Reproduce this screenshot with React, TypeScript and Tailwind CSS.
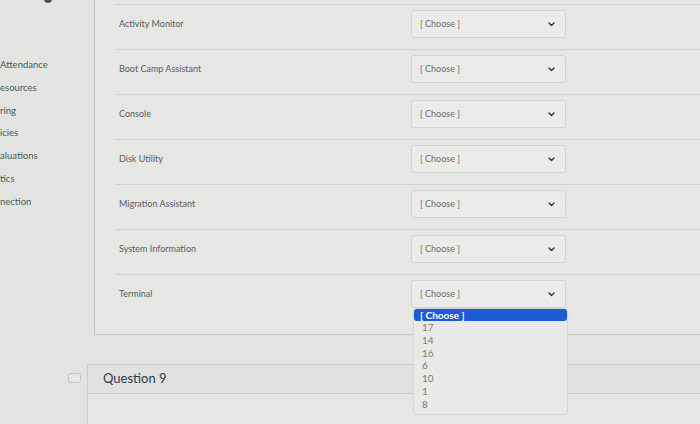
import React from "react";

const rows = [
  "Activity Monitor",
  "Boot Camp Assistant",
  "Console",
  "Disk Utility",
  "Migration Assistant",
  "System Information",
  "Terminal",
];

const nav = ["Attendance", "esources", "ring", "icies", "aluations", "tics", "nection"];

const options = ["17", "14", "16", "6", "10", "1", "8"];

function Chevron() {
  return (
    <svg width="7" height="5" viewBox="0 0 7 5" className="shrink-0">
      <path d="M1 1 L3.5 3.6 L6 1" fill="none" stroke="#3a3a3a" strokeWidth="1.4" strokeLinecap="round" strokeLinejoin="round" />
    </svg>
  );
}

function Select({ open }: { open?: boolean }) {
  return (
    <div className="relative">
      <div className="flex h-[28px] w-[155px] items-center justify-between rounded-[3px] border border-[#d3d4d2] bg-[#ebecea] pl-[8px] pr-[10px]">
        <span className="text-[9px] text-[#6b6b6b]">[ Choose ]</span>
        <Chevron />
      </div>
      {open && (
        <div className="absolute left-[2px] top-[28px] z-10 w-[155px] rounded-[4px] border border-[#d6d7d5] bg-[#e9eae8] pb-[3px]">
          <div className="rounded-[3px] bg-[#1b5bd6] pl-[6px] text-[10px] font-bold leading-[12px] text-white">[ Choose ]</div>
          {options.map((o) => (
            <div key={o} className="pl-[8px] text-[10px] leading-[12.8px] text-[#7a7a7a]">
              {o}
            </div>
          ))}
        </div>
      )}
    </div>
  );
}

export default function App() {
  return (
    <div
      className="flex h-[424px] w-[700px] overflow-hidden bg-[#e3e4e2]"
      style={{ fontFamily: "Lato, 'Noto Sans', sans-serif" }}
    >
      {/* sidebar */}
      <div className="flex w-[94px] shrink-0 flex-col">
        <div className="-mt-[5px] ml-[44px] h-[8px] w-[8px] rounded-full bg-[#555]" />
        <div className="mt-[51px] flex flex-col">
          {nav.map((n) => (
            <div key={n} className="h-[22.8px] text-[9.5px] leading-[22.8px] text-[#3c5e52]">
              {n}
            </div>
          ))}
        </div>
      </div>

      {/* main */}
      <div className="flex flex-1 flex-col">
        <div className="h-[335px] shrink-0 border-b border-l border-[#c9cac8] bg-[#e6e7e5] pl-[20px] pt-[4px]">
          {rows.map((r, i) => (
            <div key={r} className="flex h-[45px] items-start border-t border-[#d2d3d1]">
              <div className="flex h-[38px] w-[296px] items-center pl-[4px] text-[9px] text-[#5a5a5a]">{r}</div>
              <div className="pt-[5px]">
                <Select open={i === rows.length - 1} />
              </div>
            </div>
          ))}
        </div>

        <div className="mt-[29px] flex shrink-0 items-start">
          <div className="-ml-[26px] mr-[10px] mt-[9px] h-[10px] w-[13px] rounded-[3px] border-[1.5px] border-[#c4c5c3] bg-[#e8e9e7]" />
          <div className="flex flex-1 flex-col">
            <div className="-ml-[4px] flex h-[30px] items-center border border-r-0 border-[#cdcecc] bg-[#e1e2e0] pl-[15px] text-[13px] text-[#2d3b45]">
              Question 9
            </div>
            <div className="-ml-[4px] h-[40px] border-l border-[#cdcecc] bg-[#e6e7e5]" />
          </div>
        </div>
      </div>
    </div>
  );
}
